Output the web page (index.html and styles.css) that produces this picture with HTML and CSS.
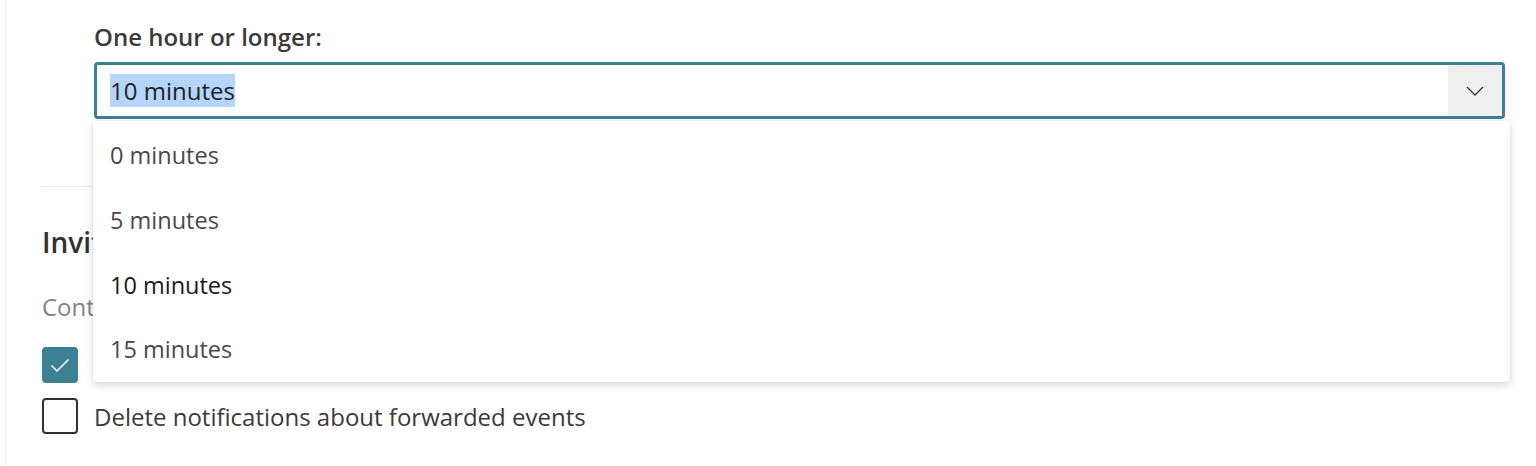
FILE: index.html
```html
<!DOCTYPE html>
<html lang="en">
<head>
    <meta charset="UTF-8">
    <meta name="viewport" content="width=device-width, initial-scale=1.0">
    <title>Calendar settings</title>

    <link rel="stylesheet" href="styles.css">

</head>
<body>

    <div class="painel">
        <div class="campo">
            <p class="campo-rotulo">One hour or longer:</p>
            <div class="seletor">
                <span class="seletor-valor"><span class="marcado">10 minutes</span></span>
                <span class="seletor-seta">
                    <svg width="18" height="10" viewBox="0 0 18 10"><polyline points="1,1 9,9 17,1" fill="none" stroke="#323130" stroke-width="1.3"/></svg>
                </span>
            </div>

            <ul class="lista">
                <li>0 minutes</li>
                <li>5 minutes</li>
                <li class="atual">10 minutes</li>
                <li>15 minutes</li>
            </ul>
        </div>

        <div class="divisor"></div>

        <h2 class="titulo">Invitations from other people</h2>
        <p class="descricao">Control how invitations and responses are handled</p>

        <label class="opcao">
            <span class="caixa caixa-marcada">
                <svg width="20" height="15" viewBox="0 0 20 15"><polyline points="1.5,7.5 7,13 18.5,1.5" fill="none" stroke="#fff" stroke-width="1.5"/></svg>
            </span>
            Delete invitations and responses that have been updated
        </label>
        <label class="opcao">
            <span class="caixa"></span>
            Delete notifications about forwarded events
        </label>
    </div>

</body>
</html>
```

FILE: styles.css
```css
@charset "utf-8";

*{
    padding: 0px;
    margin: 0px;
    box-sizing: border-box;
}
body{
    background-color: #fff;
    font-family: "Open Sans", "Noto Sans", sans-serif;
    color: #3b3a39;
    overflow: hidden;
}
.painel{
    margin-left: 5px;
    border-left: 1px solid #f1f1f1;
    padding-left: 36px;
    height: 466px;
}
.campo{
    position: relative;
    margin-left: 52px;
    width: 1411px;
    padding-top: 22px;
}
.campo-rotulo{
    font-size: 24px;
    font-weight: 600;
    line-height: 30px;
    color: #3b3a39;
}
.seletor{
    margin-top: 10px;
    height: 57px;
    border: 3px solid #3d7f93;
    border-radius: 4px;
    display: flex;
    align-items: center;
}
.seletor-valor{
    flex: 1;
    padding-left: 13px;
    font-size: 24px;
    color: #201f1e;
}
.marcado{
    background-color: #b4d5fd;
}
.seletor-seta{
    width: 54px;
    align-self: stretch;
    background-color: #efefef;
    display: flex;
    align-items: center;
    justify-content: center;
}
.lista{
    position: absolute;
    left: -1px;
    top: 121px;
    width: 1417px;
    padding-top: 2px;
    list-style: none;
    background-color: #fff;
    border-radius: 4px;
    box-shadow: 0 3px 8px rgba(0, 0, 0, 0.16), 0 0 2px rgba(0, 0, 0, 0.10);
    z-index: 2;
}
.lista li{
    height: 64.75px;
    line-height: 65px;
    padding-left: 17px;
    font-size: 23.5px;
    color: #4a4846;
}
.lista li.atual{
    color: #1b1a19;
}
.divisor{
    margin-top: 67px;
    height: 1px;
    width: 1463px;
    background-color: #e9e9e9;
}
.titulo{
    margin-top: 37px;
    font-size: 28px;
    font-weight: 600;
    line-height: 36px;
    color: #323130;
}
.descricao{
    margin-top: 31px;
    font-size: 24px;
    line-height: 32px;
    color: #858380;
}
.opcao{
    display: flex;
    align-items: center;
    gap: 16px;
    font-size: 24px;
    color: #3b3a39;
    height: 36px;
    margin-bottom: 15px;
}
.descricao + .opcao{
    margin-top: 24px;
}
.caixa{
    width: 36px;
    height: 36px;
    border: 2px solid #323130;
    border-radius: 4px;
    display: flex;
    align-items: center;
    justify-content: center;
}
.caixa-marcada{
    background-color: #3d7f93;
    border-color: #3d7f93;
}
```
